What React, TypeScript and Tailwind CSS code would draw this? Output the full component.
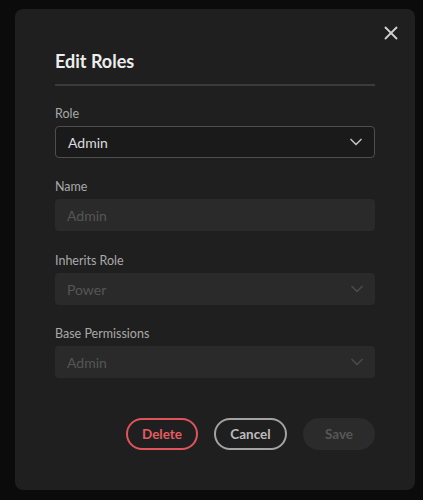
import React from "react";
import { ChevronDown, X } from "lucide-react";

const font = { fontFamily: "Lato, 'Noto Sans', sans-serif" };

function Label({ children }: { children: React.ReactNode }) {
  return <div className="text-[12.5px] leading-4 text-[#a9a9a9]">{children}</div>;
}

export default function App() {
  return (
    <div className="w-full h-[500px] bg-[#0b0b0b] pt-[9px] pl-[15px]" style={font}>
      <div className="relative w-[400px] h-[481px] rounded-lg bg-[#1f1f1f] px-10 pt-10">
        <button className="absolute top-[13px] right-[13px] text-[#d0d0d0]">
          <X size={22} strokeWidth={2} />
        </button>
        <h2 className="text-[18px] leading-6 font-bold text-[#ededed]">Edit Roles</h2>
        <div className="mt-[11px] h-[2px] bg-[#3b3b3b]" />

        <div className="mt-[20px]">
          <Label>Role</Label>
          <div className="mt-1 h-8 flex items-center justify-between rounded border border-[#4e4e4e] bg-[#1a1a1a] pl-3 pr-2">
            <span className="text-[14px] text-[#dcdcdc]">Admin</span>
            <ChevronDown size={20} strokeWidth={2} className="text-[#bdbdbd]" />
          </div>
        </div>

        <div className="mt-[21px]">
          <Label>Name</Label>
          <div className="mt-1 h-8 flex items-center rounded bg-[#2a2a2a] px-3">
            <span className="text-[14px] text-[#565656]">Admin</span>
          </div>
        </div>

        <div className="mt-[22px]">
          <Label>Inherits Role</Label>
          <div className="mt-1 h-8 flex items-center justify-between rounded bg-[#2a2a2a] pl-3 pr-2">
            <span className="text-[14px] text-[#565656]">Power</span>
            <ChevronDown size={20} strokeWidth={2} className="text-[#4a4a4a]" />
          </div>
        </div>

        <div className="mt-[21px]">
          <Label>Base Permissions</Label>
          <div className="mt-1 h-8 flex items-center justify-between rounded bg-[#2a2a2a] pl-3 pr-2">
            <span className="text-[14px] text-[#565656]">Admin</span>
            <ChevronDown size={20} strokeWidth={2} className="text-[#4a4a4a]" />
          </div>
        </div>

        <div className="mt-10 flex justify-end gap-4">
          <button className="h-8 w-[72px] rounded-full border-2 border-[#e0545b] text-[13.5px] font-bold text-[#e65c61]">
            Delete
          </button>
          <button className="h-8 w-[73px] rounded-full border-2 border-[#a3a3a3] text-[13.5px] font-bold text-[#bdbdbd]">
            Cancel
          </button>
          <button className="h-8 w-[72px] rounded-full bg-[#2b2b2b] text-[13.5px] font-bold text-[#575757]">
            Save
          </button>
        </div>
      </div>
    </div>
  );
}
